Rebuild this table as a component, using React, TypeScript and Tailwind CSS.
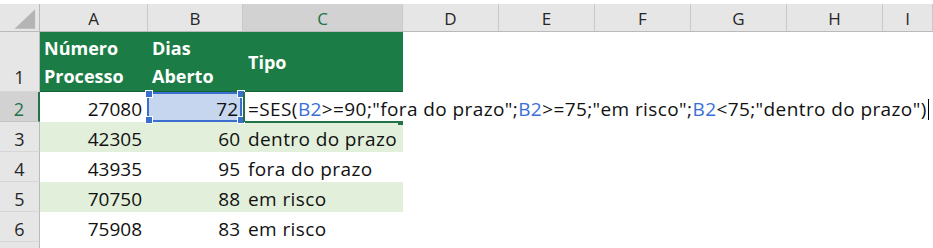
const cols = [
  { l: 'A', w: 'w-[108px]' },
  { l: 'B', w: 'w-[95px]' },
  { l: 'C', w: 'w-[160px]' },
  { l: 'D', w: 'w-[96px]' },
  { l: 'E', w: 'w-[96px]' },
  { l: 'F', w: 'w-[96px]' },
  { l: 'G', w: 'w-[96px]' },
  { l: 'H', w: 'w-[96px]' },
  { l: 'I', w: 'flex-1' },
];

const rows = [
  { n: 3, num: '42305', dias: '60', tipo: 'dentro do prazo', band: true },
  { n: 4, num: '43935', dias: '95', tipo: 'fora do prazo', band: false },
  { n: 5, num: '70750', dias: '88', tipo: 'em risco', band: true },
  { n: 6, num: '75908', dias: '83', tipo: 'em risco', band: false },
];

function Handle({ pos }: { pos: string }) {
  return <span className={`absolute ${pos} w-[6px] h-[6px] bg-[#3a6fd0] outline outline-1 outline-white`} />;
}

export default function App() {
  return (
    <div className="w-[933px] h-[248px] overflow-hidden bg-white font-['Open_Sans',sans-serif] text-[19px] text-[#111]">
      <div className="h-[4px] bg-white" />

      {/* letras das colunas */}
      <div className="flex h-[28px] bg-[#e6e6e6] border-b border-[#bababa] text-[17px] text-[#262626]">
        <div className="w-[40px] shrink-0 border-r border-[#bababa] flex items-center justify-center">
          <svg width="40" height="27" viewBox="0 0 40 27">
            <polygon points="36,5 36,25 15,25" fill="#b4b4b4" />
          </svg>
        </div>
        {cols.map((c) => (
          <div
            key={c.l}
            className={`${c.w} shrink-0 flex items-center justify-center pt-[2px] border-r border-[#c9c9c9] ${
              c.l === 'C' ? 'bg-[#d2d2d2] text-[#217346]' : ''
            }`}
          >
            {c.l}
          </div>
        ))}
      </div>

      {/* linha 1 - cabeçalho da tabela */}
      <div className="flex h-[60px]">
        <div className="w-[40px] shrink-0 bg-[#e6e6e6] border-r border-[#bababa] border-b border-b-[#d6d6d6] flex items-end justify-center leading-[28px] text-[18px] text-[#262626]">
          1
        </div>
        <div className="flex w-[363px] bg-[#1b7d45] border-b border-[#156236] text-white text-[18px] font-bold leading-[28px]">
          <div className="w-[108px] pl-[4px] pt-[2px]">
            Número
            <br />
            Processo
          </div>
          <div className="w-[95px] pl-[4px] pt-[2px]">
            Dias
            <br />
            Aberto
          </div>
          <div className="w-[160px] pl-[5px] flex items-center">Tipo</div>
        </div>
      </div>

      {/* linha 2 - editando C2 */}
      <div className="flex h-[30px] leading-[28px]">
        <div className="w-[40px] shrink-0 bg-[#d2d2d2] border-r-2 border-r-[#217346] border-b border-b-[#c4c4c4] flex justify-center pt-[3px] text-[18px] text-[#217346]">
          2
        </div>
        <div className="w-[107px] shrink-0 text-right pr-[5px] pt-[3px]">27080</div>
        <div className="relative w-[95px] shrink-0 bg-[#c6d6ef] border-2 border-[#3a6fd0] text-right pr-[2px] pt-[1px]">
          72
          <Handle pos="-left-[3px] -top-[3px]" />
          <Handle pos="-right-[4px] -top-[3px]" />
          <Handle pos="-left-[3px] -bottom-[3px]" />
          <Handle pos="-right-[4px] -bottom-[3px]" />
        </div>
        <div className="relative w-[158px] shrink-0 ml-[1px] border-l-2 border-[#217346] pl-[3px] pt-[3px] whitespace-nowrap tracking-[0.4px]">
          <span>=SES(</span>
          <span className="text-[#3a6fd8]">B2</span>
          <span>&gt;=90;"fora do prazo";</span>
          <span className="text-[#3a6fd8]">B2</span>
          <span>&gt;=75;"em risco";</span>
          <span className="text-[#3a6fd8]">B2</span>
          <span>&lt;75;"dentro do prazo")</span>
          <span className="inline-block w-[1px] h-[21px] bg-black align-[-4px] ml-[1px]" />
          <span className="absolute left-0 -bottom-[1px] w-[156px] h-[2px] bg-[#217346]" />
          <span className="absolute -right-[2px] -bottom-[3px] w-[5px] h-[4px] bg-[#217346]" />
        </div>
      </div>

      {/* linhas de dados */}
      {rows.map((r) => (
        <div key={r.n} className="flex h-[30px] leading-[28px]">
          <div className="w-[40px] shrink-0 bg-[#e6e6e6] border-r border-[#bababa] border-b border-b-[#d6d6d6] flex justify-center pt-[3px] text-[18px] text-[#262626]">
            {r.n}
          </div>
          <div className={`flex w-[363px] pt-[3px] ${r.band ? 'bg-[#e2efda]' : 'bg-white'}`}>
            <div className="w-[108px] text-right pr-[6px]">{r.num}</div>
            <div className="w-[95px] text-right pr-[3px]">{r.dias}</div>
            <div className="w-[160px] pl-[5px] whitespace-nowrap tracking-[0.4px]">{r.tipo}</div>
          </div>
        </div>
      ))}

      <div className="flex h-[6px]">
        <div className="w-[40px] shrink-0 bg-[#e6e6e6] border-r border-[#bababa]" />
      </div>
    </div>
  );
}
